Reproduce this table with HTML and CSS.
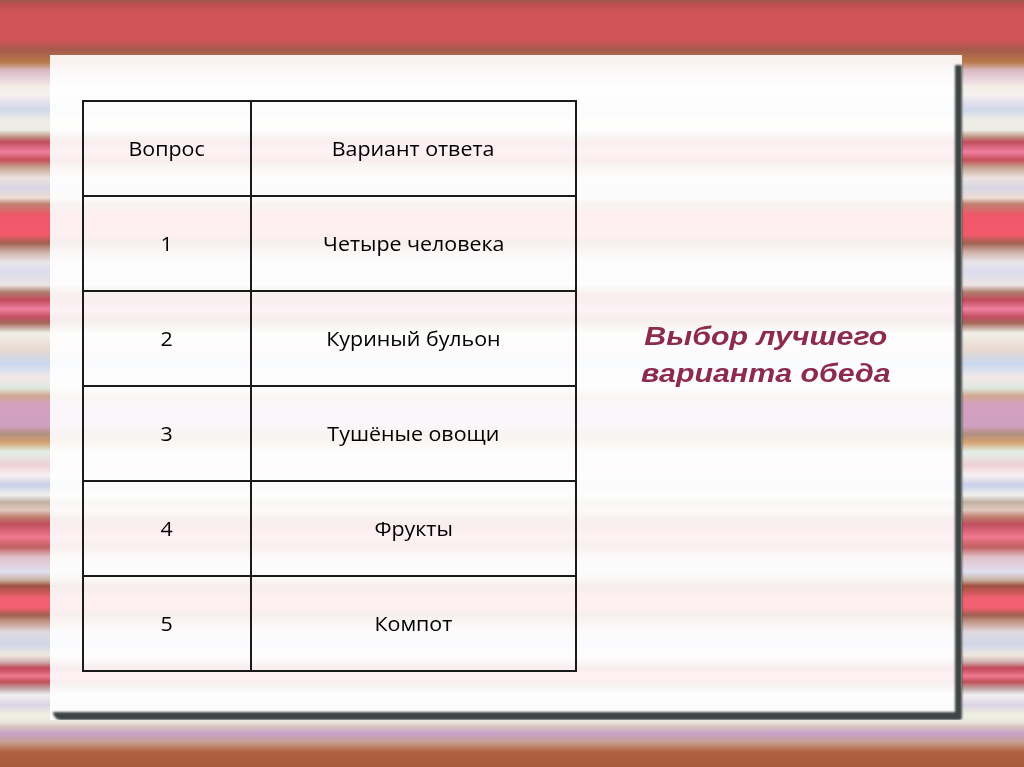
FILE: index.html
```html
<!DOCTYPE html>
<html lang="ru">
<head>
<meta charset="utf-8">
<title>Выбор лучшего варианта обеда</title>
<link rel="stylesheet" href="styles.css">
</head>
<body>
<div class="panel">
  <table class="quiz">
    <tr><td class="c-num"><span class="txt">Вопрос</span></td><td><span class="txt">Вариант ответа</span></td></tr>
    <tr><td class="c-num"><span class="txt">1</span></td><td><span class="txt">Четыре человека</span></td></tr>
    <tr><td class="c-num"><span class="txt">2</span></td><td><span class="txt">Куриный бульон</span></td></tr>
    <tr><td class="c-num"><span class="txt">3</span></td><td><span class="txt">Тушёные овощи</span></td></tr>
    <tr><td class="c-num"><span class="txt">4</span></td><td><span class="txt">Фрукты</span></td></tr>
    <tr><td class="c-num"><span class="txt">5</span></td><td><span class="txt">Компот</span></td></tr>
  </table>
  <div class="side">
    <h1 class="title">Выбор лучшего<br>варианта обеда</h1>
  </div>
</div>
</body>
</html>
```
FILE: styles.css
```css
html {
  height: 767px;
  background: linear-gradient(to bottom,
    #9a5a4e 0px, #b85050 3px, #d05458 12px, #d05458 40px, #a55a4c 50px,
    #b87848 62px, #d8b8c0 70px, #e6cfd8 78px, #f4ece6 86px, #f6f2f0 95px,
    #e8e4ee 100px, #d0d8ea 110px, #eeeee6 120px, #ecece4 130px, #c09080 137px,
    #c04e5e 142px, #f07ea0 152px, #c45058 160px, #c8a896 168px, #ece2e0 178px,
    #d8d6e4 188px, #ecdcd4 198px, #c08070 204px, #ee5868 215px, #f05a6a 235px,
    #a06050 243px, #d0b0a6 252px, #e8e4e8 262px, #dcdcee 272px, #ece4e2 285px,
    #b08070 292px, #c24a5a 300px, #f080a0 309px, #c25060 317px, #a46858 323px,
    #f0f0e8 333px, #e8d8d0 350px, #c8d8f0 364px, #f2e8ea 377px, #e0e8e0 388px,
    #d0a890 396px, #d4a0c0 404px, #d0a0c0 426px, #b09080 434px, #d4a070 442px,
    #e0f0e8 452px, #f0d0d8 465px, #f8f0f0 475px, #c8d0e8 485px, #f0f0f0 495px,
    #c0b0a0 502px, #e0c8c0 510px, #c08070 517px, #c04e5e 524px, #f07890 537px,
    #c06060 547px, #e0c0c8 557px, #e0e0f0 572px, #c8b0a0 580px, #a05040 586px,
    #f06070 598px, #f06070 608px, #a06050 615px, #c09080 621px, #e0d8e0 632px,
    #d0d8e8 645px, #f0e8e0 655px, #d0b0b0 662px, #c04858 668px, #f07890 676px,
    #c05058 682px, #c0a0a0 688px, #f0f0f0 695px, #dcd4e6 705px, #f0f0e0 715px,
    #e8e8e0 722px, #d8c0c0 727px, #c4a0c8 734px, #c8a090 742px, #b06040 752px,
    #a85c3c 767px) no-repeat;
  background-size: 100% 767px;
}

body {
  margin: 0;
  padding: 55px 0 0 50px;
  font-family: "Open Sans", "Noto Sans", sans-serif;
  color: #000;
}

.panel {
  position: relative;
  box-sizing: border-box;
  width: 912px;
  height: 665px;
  padding: 45px 8px 0 32px;
  display: flex;
  align-items: flex-start;
  background: rgba(255, 255, 255, 0.9);
}

.panel::after {
  content: "";
  position: absolute;
  top: 10px;
  left: 3px;
  right: 0;
  bottom: 0;
  border-right: 7px solid #3e4343;
  border-bottom: 8px solid #3e4343;
  border-radius: 0 0 3px 8px;
  filter: blur(0.8px);
  pointer-events: none;
}

.quiz {
  width: 495px;
  height: 572px;
  border-collapse: collapse;
  flex: none;
}

.quiz td {
  border: 2px solid #1a1a1a;
  text-align: center;
  vertical-align: middle;
  padding: 0;
  font-size: 20px;
}

.quiz .c-num {
  width: 166px;
}

.txt {
  display: inline-block;
  transform: scaleX(1.07);
  white-space: nowrap;
}

.side {
  flex: 1;
  text-align: center;
  margin-top: 218px;
}

.title {
  display: inline-block;
  margin: 0;
  font-family: "Liberation Sans", Arial, sans-serif;
  font-weight: bold;
  font-style: italic;
  font-size: 25.5px;
  line-height: 37px;
  color: #8c2b4f;
  transform: scaleX(1.19);
}
```
